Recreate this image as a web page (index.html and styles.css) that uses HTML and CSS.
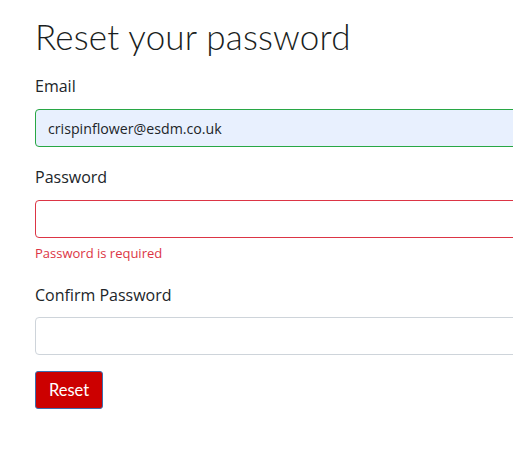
FILE: index.html
```html
<!DOCTYPE html>
<html lang="en">
<head>
<meta charset="utf-8">
<title>Reset your password</title>
<link rel="stylesheet" href="styles.css">
</head>
<body>
<main class="page">
  <h1 class="title">Reset your password</h1>
  <form class="form">
    <div class="group">
      <label class="label" for="email">Email</label>
      <input class="input input-valid" id="email" type="email" value="crispinflower@esdm.co.uk">
    </div>
    <div class="group group-pw">
      <label class="label" for="pw">Password</label>
      <input class="input input-invalid" id="pw" type="password">
      <div class="error">Password is required</div>
    </div>
    <div class="group group-confirm">
      <label class="label" for="cpw">Confirm Password</label>
      <input class="input" id="cpw" type="password">
    </div>
    <button class="btn" type="button">Reset</button>
  </form>
</main>
</body>
</html>
```
FILE: styles.css
```css
html, body {
  margin: 0;
  padding: 0;
  background: #ffffff;
  overflow: hidden;
}
.page {
  padding: 15px 0 0 35px;
  font-family: "Open Sans", "Noto Sans", sans-serif;
  color: #212529;
  width: 478px;
  overflow: hidden;
}
.title {
  margin: 0;
  font-family: "Lato", "DejaVu Sans", sans-serif;
  font-weight: 300;
  font-size: 35px;
  line-height: 42px;
  color: #1a1e21;
  letter-spacing: 0.2px;
}
.form {
  margin-top: 17px;
  display: flex;
  flex-direction: column;
  align-items: flex-start;
}
.group {
  display: flex;
  flex-direction: column;
  width: 100%;
  margin-bottom: 18px;
}
.label {
  font-size: 16px;
  line-height: 24px;
  margin-bottom: 11px;
}
.input {
  box-sizing: border-box;
  width: 560px;
  height: 38px;
  border: 1px solid #ced4da;
  border-radius: 4px;
  padding: 0 12px;
  font-family: "Open Sans", sans-serif;
  font-size: 14.2px;
  color: #212529;
  background: #ffffff;
  outline: none;
}
.input-valid {
  border-color: #28a745;
  background: #e8f0fe;
}
.input-invalid {
  border-color: #dc3545;
}
.error {
  margin-top: 6px;
  font-size: 13px;
  line-height: 19px;
  color: #dc3545;
}
.group-pw { margin-bottom: 20px; }
.group-confirm { margin-bottom: 16px; }
.group-confirm .label { margin-bottom: 10px; }
.btn {
  box-sizing: border-box;
  width: 68px;
  height: 38px;
  background: #cc0000;
  color: #ffffff;
  border: 1px solid #3a6fb0;
  border-radius: 3px;
  font-family: "Lato", sans-serif;
  font-weight: 400;
  font-size: 16.5px;
  padding: 0;
}
```
